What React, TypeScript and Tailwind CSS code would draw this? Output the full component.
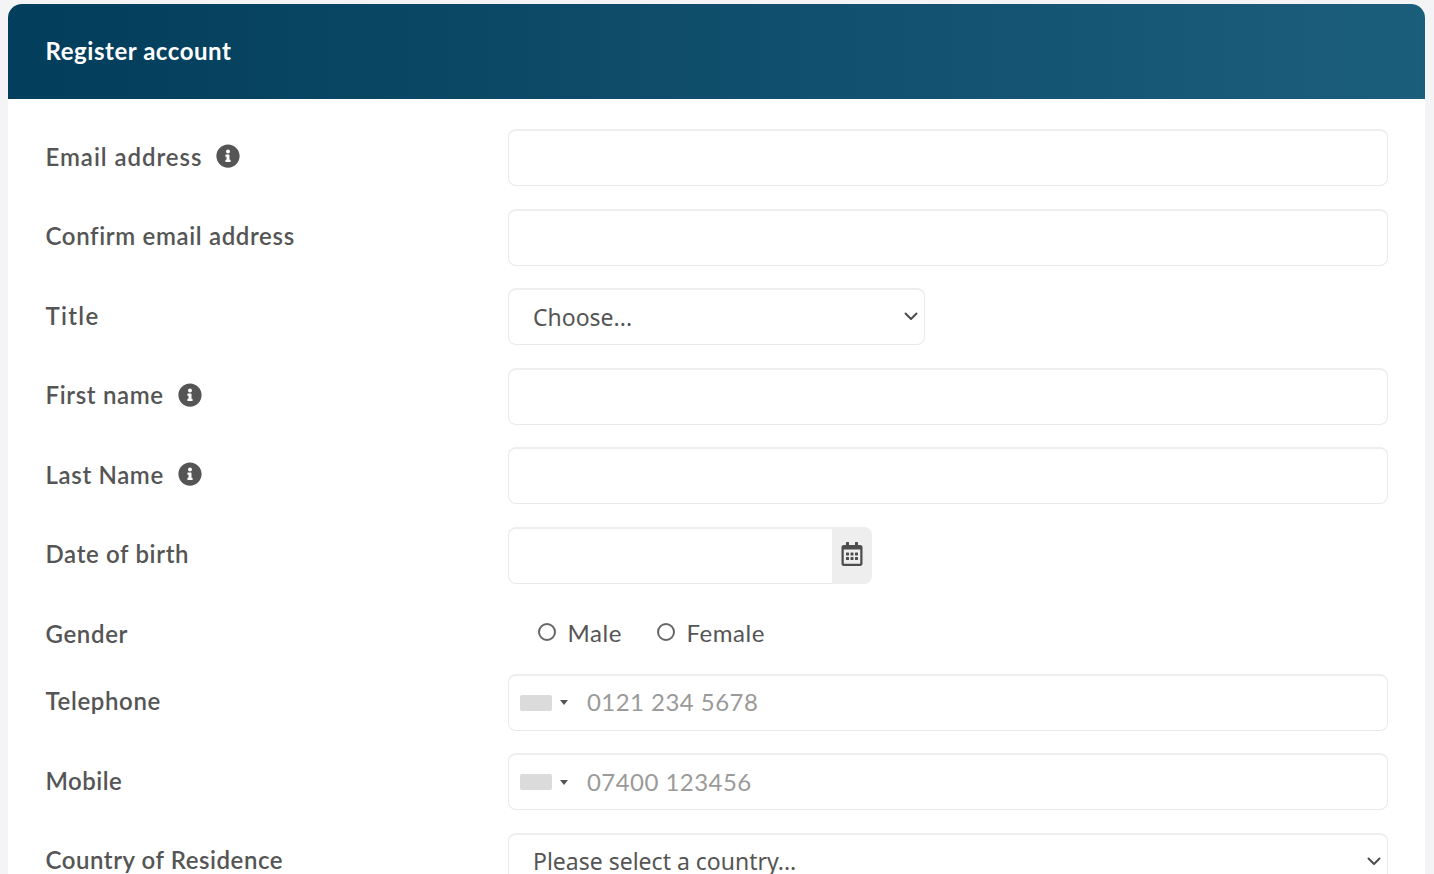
import React from "react";
import { FaInfoCircle, FaRegCalendarAlt } from "react-icons/fa";

const inputClass = "w-full h-[57px] rounded-[8px] border border-[#e9e9e9] border-t-2 border-t-[#eeeeee] bg-white outline-none";

function Chevron({ className }: { className: string }) {
    return (
        <svg className={className} viewBox="0 0 16 16" fill="none" stroke="#4d4d4d" strokeWidth="2" strokeLinecap="round" strokeLinejoin="round">
            <path d="m2.5 5.5 5.5 5.5 5.5-5.5" />
        </svg>
    );
}

function Row({ label, info, labelClass, tracking, children }: { label: string; info?: boolean; labelClass?: string; tracking?: string; children: React.ReactNode }) {
    return (
        <div className="grid grid-cols-[462px_880px] items-center">
            <div className={`flex items-center text-[24px] font-semibold text-[#555555] -ml-[0.5px] ${labelClass ?? "leading-[36px] -mt-[2px]"}`}>
                <span className={tracking ?? "tracking-[0.65px]"}>{label}</span>
                {info && <FaInfoCircle className="ml-[14px] text-[24px] text-[#555555] -mt-[1px]" />}
            </div>
            {children}
        </div>
    );
}

function Select({ text, width }: { text: string; width: string }) {
    return (
        <div className={`relative ${width}`}>
            <select className={`${inputClass} appearance-none pl-[24px] text-[23px] text-[#555555] font-['Noto_Sans',sans-serif]`} defaultValue="">
                <option value="">{text}</option>
            </select>
            <Chevron className="absolute right-[6px] top-[20px] w-[16px] h-[16px]" />
        </div>
    );
}

function Phone({ placeholder }: { placeholder: string }) {
    return (
        <div className={`${inputClass} flex items-center pl-[11px]`}>
            <span className="w-[32px] h-[16px] rounded-[2px] bg-[#dbdbdb]" />
            <span className="ml-[8px] w-0 h-0 border-x-[4px] border-x-transparent border-t-[5px] border-t-[#555555]" />
            <input className="ml-[19px] flex-1 -mt-[1px] text-[24px] tracking-[0.45px] text-[#555555] outline-none placeholder:text-[#9a9a9a]" placeholder={placeholder} />
        </div>
    );
}

function Radio({ label }: { label: string }) {
    return (
        <label className="flex items-center text-[24px] tracking-[0.55px] text-[#555555]">
            <span className="w-[18px] h-[18px] rounded-full border-2 border-[#666666] bg-white -mt-[3px]" />
            <span className="ml-[11.5px]">{label}</span>
        </label>
    );
}

export default function App() {
    return (
        <div className="h-screen overflow-hidden bg-[#f4f4f6] pt-[4px] pl-[8px] pr-[9px] font-['Lato',sans-serif]">
            <div className="bg-white rounded-t-[14px] h-full">
                <div className="h-[95px] rounded-t-[14px] bg-gradient-to-r from-[#033e5c] to-[#1b5e7c] flex items-center pl-[37.5px]">
                    <h1 className="text-[24px] font-bold tracking-[0.55px] text-white -mt-[1px]">Register account</h1>
                </div>
                <div className="pt-[30px] pl-[38px] flex flex-col gap-y-[22.5px]">
                    <Row label="Email address" info tracking="tracking-[0.95px]"><input className={inputClass} /></Row>
                    <Row label="Confirm email address"><input className={inputClass} /></Row>
                    <Row label="Title" tracking="tracking-[1.3px]"><Select text="Choose..." width="w-[417px]" /></Row>
                    <Row label="First name" info><input className={inputClass} /></Row>
                    <Row label="Last Name" info><input className={inputClass} /></Row>
                    <Row label="Date of birth">
                        <div className="flex w-[364px] h-[57px]">
                            <input className={`${inputClass} rounded-r-none border-r-0 flex-1 min-w-0`} />
                            <div className="w-[40px] h-[57px] rounded-r-[8px] bg-[#eeeeee] flex items-center justify-center">
                                <FaRegCalendarAlt className="text-[24px] text-[#4d4d4d] -mt-[2px]" />
                            </div>
                        </div>
                    </Row>
                    <Row label="Gender" labelClass="h-[45px] pt-[10px]">
                        <div className="flex h-[45px] items-center pt-[9px] pl-[30px] gap-x-[35px]">
                            <Radio label="Male" />
                            <Radio label="Female" />
                        </div>
                    </Row>
                    <Row label="Telephone"><Phone placeholder="0121 234 5678" /></Row>
                    <Row label="Mobile" tracking="tracking-[0.5px]"><Phone placeholder="07400 123456" /></Row>
                    <Row label="Country of Residence" tracking="tracking-[0.55px]"><Select text="Please select a country..." width="w-full" /></Row>
                </div>
            </div>
        </div>
    );
}
